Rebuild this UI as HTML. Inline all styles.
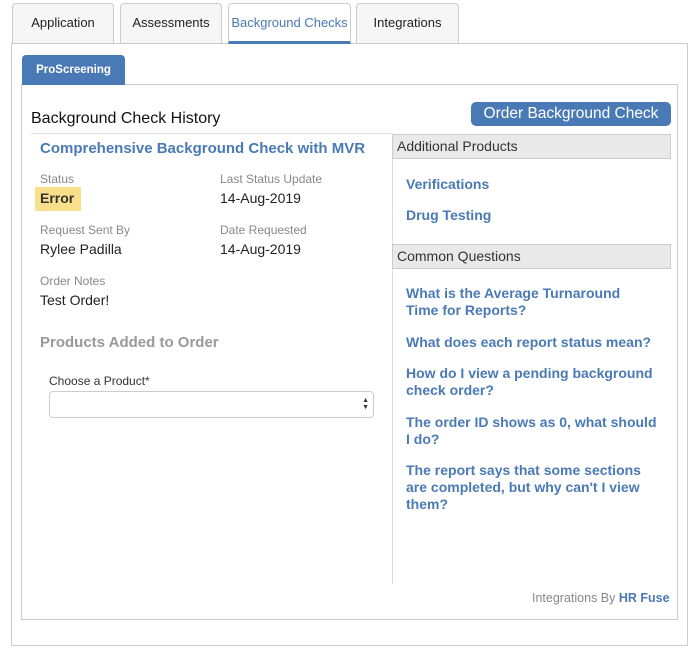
<!DOCTYPE html><html><head><style>
*{margin:0;padding:0;box-sizing:border-box}
body{width:698px;height:652px;background:#fff;font-family:"Liberation Sans",sans-serif;position:relative;overflow:hidden;color:#222}
.a{position:absolute;white-space:nowrap}
.tab{position:absolute;top:3px;height:40px;border:1px solid #ccc;border-bottom:none;border-radius:4px 4px 0 0;background:#f6f6f6;font-size:13px;text-align:center;line-height:38px;color:#222;white-space:nowrap}
.lbl{font-size:12px;color:#888}
.val{font-size:14px;color:#222}
.bl{color:#4a7ab5;font-weight:bold;font-size:13.5px}
.hd{position:absolute;left:392px;width:279px;height:25px;background:#e9e9e9;border:1px solid #ccc;font-size:14px;line-height:23px;padding-left:4px;color:#333}
</style></head><body>
<div class="a" style="left:11px;top:43px;width:677px;height:603px;border:1px solid #ccc"></div>
<div class="tab" style="left:12px;width:102px">Application</div>
<div class="tab" style="left:120px;width:102px">Assessments</div>
<div class="tab" style="left:228px;width:123px;background:#fff;color:#4a7ab5;border-bottom:3px solid #4a7ab5;height:41px">Background Checks</div>
<div class="tab" style="left:356px;width:103px">Integrations</div>
<div class="a" style="left:21px;top:84px;width:657px;height:536px;border:1px solid #ccc"></div>
<div class="a" style="left:22px;top:55px;width:103px;height:30px;background:#4a7ab5;border-radius:4px 4px 0 0;color:#fff;font-weight:bold;font-size:11.5px;text-align:center;line-height:30px">ProScreening</div>
<div class="a" style="left:31px;top:110px;font-size:16px;color:#111">Background Check History</div>
<div class="a" style="left:471px;top:102px;width:200px;height:24px;background:#4a7ab5;border-radius:5px;color:#fff;font-size:15.5px;text-align:center;line-height:24px">Order Background Check</div>
<div class="a" style="left:31px;top:133px;width:361px;border-top:1px solid #ddd"></div>
<div class="a" style="left:392px;top:134px;height:450px;border-left:1px solid #ddd"></div>
<div class="a bl" style="left:40px;top:140px;font-size:15px">Comprehensive Background Check with MVR</div>
<div class="a lbl" style="left:40px;top:172px">Status</div>
<div class="a" style="left:35px;top:187px;width:46px;height:24px;background:#f8e08a"></div>
<div class="a val" style="left:40px;top:190px;font-weight:bold;color:#333">Error</div>
<div class="a lbl" style="left:220px;top:172px">Last Status Update</div>
<div class="a val" style="left:220px;top:190px">14-Aug-2019</div>
<div class="a lbl" style="left:40px;top:223px">Request Sent By</div>
<div class="a val" style="left:40px;top:241px">Rylee Padilla</div>
<div class="a lbl" style="left:220px;top:223px">Date Requested</div>
<div class="a val" style="left:220px;top:241px">14-Aug-2019</div>
<div class="a lbl" style="left:40px;top:274px">Order Notes</div>
<div class="a val" style="left:40px;top:292px">Test Order!</div>
<div class="a" style="left:40px;top:334px;font-size:15px;font-weight:bold;color:#999">Products Added to Order</div>
<div class="a" style="left:49px;top:374px;font-size:12px;color:#333">Choose a Product*</div>
<div class="a" style="left:49px;top:391px;width:325px;height:27px;border:1px solid #ccc;border-radius:4px;background:#fff"><span style="position:absolute;right:4px;top:5px;font-size:7px;line-height:7px;color:#333">▲<br>▼</span></div>
<div class="hd" style="top:134px">Additional Products</div>
<div class="a bl" style="left:406px;top:176px;font-size:14px">Verifications</div>
<div class="a bl" style="left:406px;top:207px;font-size:14px">Drug Testing</div>
<div class="hd" style="top:244px">Common Questions</div>
<div class="a bl" style="left:406px;top:285px;line-height:17px;font-size:14px">What is the Average Turnaround<br>Time for Reports?</div>
<div class="a bl" style="left:406px;top:334px;line-height:17px;font-size:14px">What does each report status mean?</div>
<div class="a bl" style="left:406px;top:365px;line-height:17px;font-size:14px">How do I view a pending background<br>check order?</div>
<div class="a bl" style="left:406px;top:414px;line-height:17px;font-size:14px">The order ID shows as 0, what should<br>I do?</div>
<div class="a bl" style="left:406px;top:462px;line-height:17px;font-size:14px">The report says that some sections<br>are completed, but why can't I view<br>them?</div>
<div class="a" style="left:532px;top:591px;font-size:12.5px;color:#888">Integrations By <b style="color:#4a7ab5">HR Fuse</b></div>
</body></html>
